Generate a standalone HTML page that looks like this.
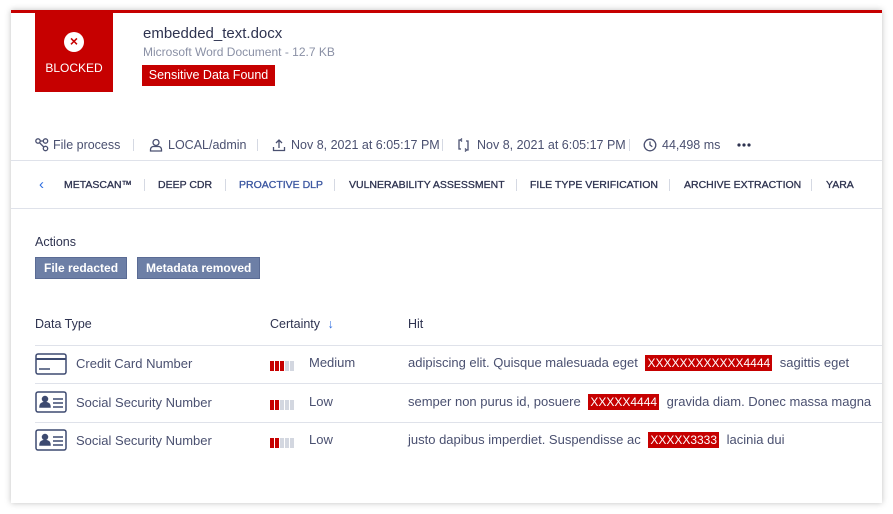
<!DOCTYPE html>
<html><head><style>
*{margin:0;padding:0;box-sizing:border-box}
body{width:893px;height:514px;background:#fff;font-family:"Liberation Sans",sans-serif;position:relative;overflow:hidden;color:#3d4260}
.card{position:absolute;left:11px;top:10px;width:871px;height:493px;background:#fff;border-top:3px solid #c60000;box-shadow:0 0 6px rgba(0,0,0,.25)}
.a{position:absolute;white-space:nowrap}
.meta{font-size:12.5px;color:#4a5070;top:138px}
.sep{position:absolute;width:1px;background:#d5d9e3}
.tab{font-size:10.5px;top:179px;color:#2e3350;font-weight:normal;-webkit-text-stroke:0.3px #2e3350}
.hl{position:absolute;height:1px;background:#dfe2ea;left:35px;width:847px}
.btn{position:absolute;top:257px;height:22px;background:#6d7fa6;border:1px solid #5a6b94;color:#fff;font-size:12px;font-weight:bold;line-height:20px;padding:0 8px}
.row{font-size:13px;color:#4a5070}
.red{background:#c60000;color:#fff;padding:1px 2px;font-size:12px}
.bars span{display:inline-block;width:4px;height:10px;margin-right:1px;background:#d3d7e0}
.bars span.r{background:#c60000}
</style></head><body>
<div class="card"></div>
<div class="a" style="left:35px;top:13px;width:78px;height:79px;background:#c60000"></div>
<div class="a" style="left:64px;top:32px;width:20px;height:20px;border-radius:50%;background:#fff;color:#c60000;font-size:14px;font-weight:bold;text-align:center;line-height:19px">×</div>
<div class="a" style="left:35px;width:78px;top:61px;text-align:center;color:#fff;font-size:12px">BLOCKED</div>
<div class="a" style="left:143px;top:25px;font-size:15px;color:#2e3350">embedded_text.docx</div>
<div class="a" style="left:143px;top:45px;font-size:12px;color:#8a90a5">Microsoft Word Document - 12.7 KB</div>
<div class="a" style="left:142px;top:65px;width:133px;height:21px;background:#c60000;color:#fff;font-size:12.5px;line-height:21px;text-align:center">Sensitive Data Found</div>

<svg class="a" style="left:35px;top:138px" width="14" height="14" viewBox="0 0 14 14" fill="none" stroke="#4a5070" stroke-width="1.3"><circle cx="3" cy="3" r="2.2"/><circle cx="10.5" cy="3" r="2.2"/><circle cx="10.5" cy="10.5" r="2.2"/><path d="M5.2 3h3M4.5 4.7l4.3 4.3"/></svg>
<div class="a meta" style="left:53px">File process</div>
<div class="sep" style="left:133px;top:139px;height:12px"></div>
<svg class="a" style="left:149px;top:138px" width="14" height="14" viewBox="0 0 14 14" fill="none" stroke="#4a5070" stroke-width="1.3"><circle cx="7" cy="4.5" r="3"/><path d="M1.5 13v-1.5a3 3 0 0 1 3-3h5a3 3 0 0 1 3 3V13z"/></svg>
<div class="a meta" style="left:168px">LOCAL/admin</div>
<div class="sep" style="left:257px;top:139px;height:12px"></div>
<svg class="a" style="left:272px;top:138px" width="14" height="14" viewBox="0 0 14 14" fill="none" stroke="#4a5070" stroke-width="1.3"><path d="M7 10V2M4 5l3-3 3 3M1.5 9v3.5h11V9"/></svg>
<div class="a meta" style="left:291px">Nov 8, 2021 at 6:05:17 PM</div>
<div class="sep" style="left:442px;top:139px;height:12px"></div>
<svg class="a" style="left:456px;top:138px" width="15" height="14" viewBox="0 0 15 14" fill="none" stroke="#4a5070" stroke-width="1.3"><path d="M5 2H3v9h2M10 3h2v9h-2M6 0.5L4.5 2 6 3.5M9 10.5l1.5 1.5L9 13.5"/></svg>
<div class="a meta" style="left:477px">Nov 8, 2021 at 6:05:17 PM</div>
<div class="sep" style="left:629px;top:139px;height:12px"></div>
<svg class="a" style="left:643px;top:138px" width="14" height="14" viewBox="0 0 14 14" fill="none" stroke="#4a5070" stroke-width="1.3"><circle cx="7" cy="7" r="5.8"/><path d="M7 3.5V7l2.3 1.8"/></svg>
<div class="a meta" style="left:662px">44,498 ms</div>
<svg class="a" style="left:737px;top:143px" width="14" height="4"><circle cx="2" cy="2" r="1.6" fill="#2e3350"/><circle cx="7" cy="2" r="1.6" fill="#2e3350"/><circle cx="12" cy="2" r="1.6" fill="#2e3350"/></svg>
<div class="hl" style="top:160px;left:11px;width:871px"></div>

<div class="a" style="left:39px;top:176px;color:#2f6ee0;font-size:15px">‹</div>
<div class="a tab" style="left:64px">METASCAN™</div>
<div class="sep" style="left:144px;top:179px;height:12px"></div>
<div class="a tab" style="left:158px">DEEP CDR</div>
<div class="sep" style="left:225px;top:179px;height:12px"></div>
<div class="a tab" style="left:239px;color:#3b56a0;-webkit-text-stroke:0.3px #3b56a0">PROACTIVE DLP</div>
<div class="sep" style="left:334px;top:179px;height:12px"></div>
<div class="a tab" style="left:349px">VULNERABILITY ASSESSMENT</div>
<div class="sep" style="left:516px;top:179px;height:12px"></div>
<div class="a tab" style="left:530px">FILE TYPE VERIFICATION</div>
<div class="sep" style="left:669px;top:179px;height:12px"></div>
<div class="a tab" style="left:684px">ARCHIVE EXTRACTION</div>
<div class="sep" style="left:811px;top:179px;height:12px"></div>
<div class="a tab" style="left:826px">YARA</div>
<div class="hl" style="top:208px;left:11px;width:871px"></div>

<div class="a" style="left:35px;top:235px;font-size:12.5px;color:#2e3350">Actions</div>
<div class="btn" style="left:35px">File redacted</div>
<div class="btn" style="left:137px">Metadata removed</div>

<div class="a" style="left:35px;top:317px;font-size:12.5px;color:#2e3350">Data Type</div>
<div class="a" style="left:270px;top:317px;font-size:12.5px;color:#2e3350">Certainty <span style="color:#2f6ee0;margin-left:4px">↓</span></div>
<div class="a" style="left:408px;top:317px;font-size:12.5px;color:#2e3350">Hit</div>
<div class="hl" style="top:345px"></div>
<div class="hl" style="top:383px"></div>
<div class="hl" style="top:422px"></div>

<svg class="a" style="left:35px;top:353px" width="32" height="22" viewBox="0 0 32 22" fill="none" stroke="#3d4a70" stroke-width="1.5"><rect x="1" y="1" width="30" height="20" rx="2"/><path d="M1 6h30" stroke-width="2"/><path d="M4 16h11"/></svg>
<div class="a row" style="left:76px;top:356px">Credit Card Number</div>
<div class="a bars" style="left:270px;top:358px"><span class="r"></span><span class="r"></span><span class="r"></span><span></span><span></span></div>
<div class="a row" style="left:309px;top:355px">Medium</div>
<div class="a row" style="left:408px;top:355px">adipiscing elit. Quisque malesuada eget <span class="red" style="margin:0 4px">XXXXXXXXXXXX4444</span> sagittis eget</div>

<svg class="a" style="left:35px;top:391px" width="32" height="22" viewBox="0 0 32 22" fill="none" stroke="#3d4a70" stroke-width="1.5"><rect x="1" y="1" width="30" height="20" rx="2"/><circle cx="10" cy="8" r="2.5" fill="#3d4a70"/><path d="M5 16c0-3 2-4.5 5-4.5s5 1.5 5 4.5z" fill="#3d4a70"/><path d="M18 8h10M18 12h10M18 16h10"/></svg>
<div class="a row" style="left:76px;top:395px">Social Security Number</div>
<div class="a bars" style="left:270px;top:397px"><span class="r"></span><span class="r"></span><span></span><span></span><span></span></div>
<div class="a row" style="left:309px;top:394px">Low</div>
<div class="a row" style="left:408px;top:394px">semper non purus id, posuere <span class="red" style="margin:0 4px">XXXXX4444</span> gravida diam. Donec massa magna</div>

<svg class="a" style="left:35px;top:429px" width="32" height="22" viewBox="0 0 32 22" fill="none" stroke="#3d4a70" stroke-width="1.5"><rect x="1" y="1" width="30" height="20" rx="2"/><circle cx="10" cy="8" r="2.5" fill="#3d4a70"/><path d="M5 16c0-3 2-4.5 5-4.5s5 1.5 5 4.5z" fill="#3d4a70"/><path d="M18 8h10M18 12h10M18 16h10"/></svg>
<div class="a row" style="left:76px;top:433px">Social Security Number</div>
<div class="a bars" style="left:270px;top:435px"><span class="r"></span><span class="r"></span><span></span><span></span><span></span></div>
<div class="a row" style="left:309px;top:432px">Low</div>
<div class="a row" style="left:408px;top:432px">justo dapibus imperdiet. Suspendisse ac <span class="red" style="margin:0 4px">XXXXX3333</span> lacinia dui</div>
</body></html>
